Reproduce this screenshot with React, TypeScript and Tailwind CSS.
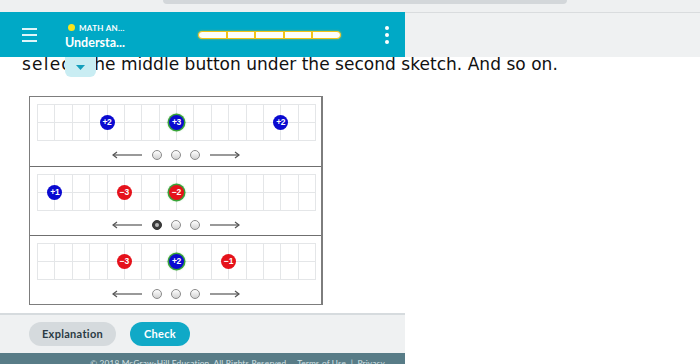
import React from "react";

type Chip = { col: number; label: string; neg: boolean; ring?: boolean };
type Panel = { chips: Chip[]; selected: number };

const panels: Panel[] = [
  {
    chips: [
      { col: 4, label: "+2", neg: false },
      { col: 8, label: "+3", neg: false, ring: true },
      { col: 14, label: "+2", neg: false },
    ],
    selected: -1,
  },
  {
    chips: [
      { col: 1, label: "+1", neg: false },
      { col: 5, label: "−3", neg: true },
      { col: 8, label: "−2", neg: true, ring: true },
    ],
    selected: 0,
  },
  {
    chips: [
      { col: 5, label: "−3", neg: true },
      { col: 8, label: "+2", neg: false, ring: true },
      { col: 11, label: "−1", neg: true },
    ],
    selected: -1,
  },
];

const COLW = 278 / 16;

function Arrow({ dir }: { dir: "left" | "right" }) {
  return (
    <svg width="31" height="8" viewBox="0 0 31 8" className="block">
      {dir === "left" ? (
        <g stroke="#555" strokeWidth="1.2" fill="none">
          <line x1="1" y1="4" x2="30" y2="4" />
          <polyline points="5,1 1,4 5,7" />
        </g>
      ) : (
        <g stroke="#555" strokeWidth="1.2" fill="none">
          <line x1="1" y1="4" x2="30" y2="4" />
          <polyline points="26,1 30,4 26,7" />
        </g>
      )}
    </svg>
  );
}

function Radio({ on }: { on: boolean }) {
  if (on) {
    return (
      <div className="w-[10px] h-[10px] rounded-full bg-[#3b3b3b] border border-[#333] flex items-center justify-center">
        <div className="w-[4px] h-[4px] rounded-full bg-[#b8b8b8]" />
      </div>
    );
  }
  return (
    <div className="w-[10px] h-[10px] rounded-full border border-[#8a8a8a] bg-gradient-to-b from-[#ffffff] to-[#d2d2d2]" />
  );
}

function PanelView({ panel, first }: { panel: Panel; first: boolean }) {
  return (
    <div
      className={`h-[69px] pl-[7px] pt-[7px] flex flex-col ${first ? "" : "border-t border-[#6f6f6f]"}`}
    >
      <div className="relative w-[279px] h-[37px]">
        <div className="grid grid-cols-[repeat(16,1fr)] grid-rows-2 w-full h-full border-l border-t border-[#e4e6e8]">
          {Array.from({ length: 32 }).map((_, i) => (
            <div key={i} className="border-r border-b border-[#e4e6e8]" />
          ))}
        </div>
        {panel.chips.map((c, i) => (
          <div
            key={i}
            className={`absolute top-[11px] w-[15px] h-[15px] rounded-full flex items-center justify-center text-white font-bold text-[8.5px] leading-none ${
              c.neg ? "bg-[#e5121b]" : "bg-[#0a0ad0]"
            } ${c.ring ? "ring-[1.5px] ring-[#37a437] shadow-[0_0_2px_1px_rgba(60,170,60,0.6)]" : ""}`}
            style={{ left: c.col * COLW - 7.5 + 0.5, fontFamily: "'Liberation Sans', Arial, sans-serif", letterSpacing: "-0.3px" }}
          >
            {c.label}
          </div>
        ))}
      </div>
      <div className="mt-[9px] flex items-center justify-center gap-[9px] w-[292px] -ml-[7px]">
        <Arrow dir="left" />
        <div className="flex items-center gap-[9px]">
          {[0, 1, 2].map((i) => (
            <Radio key={i} on={panel.selected === i} />
          ))}
        </div>
        <Arrow dir="right" />
      </div>
    </div>
  );
}

export default function App() {
  return (
    <div className="w-[700px] h-[364px] overflow-hidden bg-white relative" style={{ fontFamily: "Lato, 'Open Sans', sans-serif" }}>
      {/* top strip */}
      <div className="h-[12px] bg-[#eef0f1]">
        <div className="ml-[163px] w-[404px] h-[4px] bg-[#d3d7da] rounded-b-[5px]" />
      </div>
      {/* header */}
      <div className="flex h-[45px] relative z-10">
        <div className="w-[405px] bg-[#00a9c6] flex items-center">
          <div className="ml-[22px] w-[15px] flex flex-col gap-[4px]">
            <div className="h-[2px] bg-[#dff5f9]" />
            <div className="h-[2px] bg-[#dff5f9]" />
            <div className="h-[2px] bg-[#dff5f9]" />
          </div>
          <div className="ml-[28px] flex flex-col w-[110px] mt-[4px]">
            <div className="flex items-center gap-[4px] ml-[3px]">
              <div className="w-[7px] h-[7px] rounded-full bg-[#f7e51c]" />
              <span className="text-[8px] font-bold text-white tracking-[0.3px] leading-none">MATH AN...</span>
            </div>
            <span className="text-[12.5px] font-bold text-white leading-none mt-[5px]">Understa...</span>
          </div>
          <div className="ml-[23px] w-[143px] h-[8px] rounded-full border-[1.5px] border-[#f2c31b] bg-white flex overflow-hidden shadow-[0_0_2px_rgba(242,195,27,0.8)]">
            {[0, 1, 2, 3, 4].map((i) => (
              <div key={i} className={`flex-1 ${i < 4 ? "border-r-2 border-[#f2c31b]" : ""}`} />
            ))}
          </div>
          <div className="ml-[44px] flex flex-col gap-[3px]">
            <div className="w-[4px] h-[4px] rounded-full bg-white" />
            <div className="w-[4px] h-[4px] rounded-full bg-white" />
            <div className="w-[4px] h-[4px] rounded-full bg-white" />
          </div>
        </div>
        <div className="flex-1 bg-[#eff1f2] border-t border-[#d9dcde]" />
      </div>
      {/* content */}
      <div className="h-[256px] relative overflow-hidden">
        <div
          className="h-[16px] -mt-[1px] pl-[22px] text-[17px] leading-[16px] tracking-[0.03px] text-[#111] whitespace-nowrap"
          style={{ fontFamily: "'DejaVu Sans', Verdana, sans-serif" }}
        >
          <span className="tracking-[1.2px]">select t</span>he middle button under the second sketch. And so on.
        </div>
        <div className="absolute left-[65px] top-0 w-[31px] h-[20px] bg-[#c9edf3] rounded-b-[6px] flex items-center justify-center">
          <svg width="9" height="6" viewBox="0 0 9 6" className="mt-[2px]">
            <polygon points="0,0 9,0 4.5,5" fill="#139fbc" />
          </svg>
        </div>
        <div className="ml-[29px] mt-[24px] w-[294px] border border-[#7d7d7d] border-r-2 bg-white">
          {panels.map((p, i) => (
            <PanelView key={i} panel={p} first={i === 0} />
          ))}
        </div>
      </div>
      {/* footer */}
      <div className="w-[405px]">
        <div className="h-[2px] bg-[#d6dbde]" />
        <div className="h-[38px] bg-[#eff1f2] flex items-center pl-[29px] gap-[14px]">
          <div className="w-[87px] h-[24px] rounded-full bg-[#d5dadd] flex items-center justify-center text-[11px] font-bold text-[#2b3b44] tracking-[0.3px]">
            Explanation
          </div>
          <div className="w-[60px] h-[24px] rounded-full bg-[#10a9c7] flex items-center justify-center text-[11px] font-bold text-white tracking-[0.3px]">
            Check
          </div>
        </div>
        <div className="h-[11px] bg-[#587c87] overflow-hidden flex justify-end pr-[20px]">
          <span className="text-[8.3px] text-[#d6e2e5] whitespace-nowrap leading-none pt-[6px] tracking-[0.15px]">
            © 2018 McGraw-Hill Education. All Rights Reserved.&nbsp;&nbsp;&nbsp; Terms of Use &nbsp;|&nbsp; Privacy
          </span>
        </div>
      </div>
    </div>
  );
}
